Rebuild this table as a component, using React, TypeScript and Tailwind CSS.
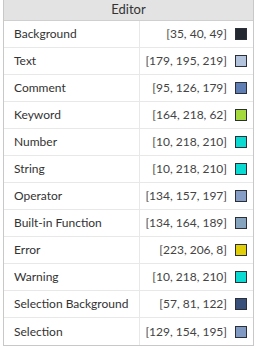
import React from 'react'

const colors: { name: string; rgb: [number, number, number] }[] = [
  { name: 'Background', rgb: [35, 40, 49] },
  { name: 'Text', rgb: [179, 195, 219] },
  { name: 'Comment', rgb: [95, 126, 179] },
  { name: 'Keyword', rgb: [164, 218, 62] },
  { name: 'Number', rgb: [10, 218, 210] },
  { name: 'String', rgb: [10, 218, 210] },
  { name: 'Operator', rgb: [134, 157, 197] },
  { name: 'Built-in Function', rgb: [134, 164, 189] },
  { name: 'Error', rgb: [223, 206, 8] },
  { name: 'Warning', rgb: [10, 218, 210] },
  { name: 'Selection Background', rgb: [57, 81, 122] },
  { name: 'Selection', rgb: [129, 154, 195] },
]

export default function App() {
  return (
    <div className="w-[258px] h-[349px] bg-white pl-[3px] pr-[4px] font-['Lato',sans-serif] text-[12px] text-[#333]">
      <div className="border-x border-b border-[#c8c8c8]">
        <div className="h-[21px] bg-[#e3e3e3] border-b border-[#cfcfcf] flex items-center justify-center text-[13px] text-[#333]">
          Editor
        </div>
        {colors.map((c, i) => (
          <div key={i} className="flex h-[27px] border-b border-[#e8e8e8] last:border-b-0">
            <div className="w-[136px] shrink-0 flex items-center pl-[10px] border-r border-[#e8e8e8] whitespace-nowrap">
              {c.name}
            </div>
            <div className="flex-1 flex items-center justify-end pr-[6px] gap-[8px] whitespace-nowrap">
              <span className="text-[#444]">[{c.rgb.join(', ')}]</span>
              <span
                className="w-[12px] h-[12px] shrink-0 border border-[#2a2f38]"
                style={{ backgroundColor: `rgb(${c.rgb.join(',')})` }}
              />
            </div>
          </div>
        ))}
      </div>
    </div>
  )
}
